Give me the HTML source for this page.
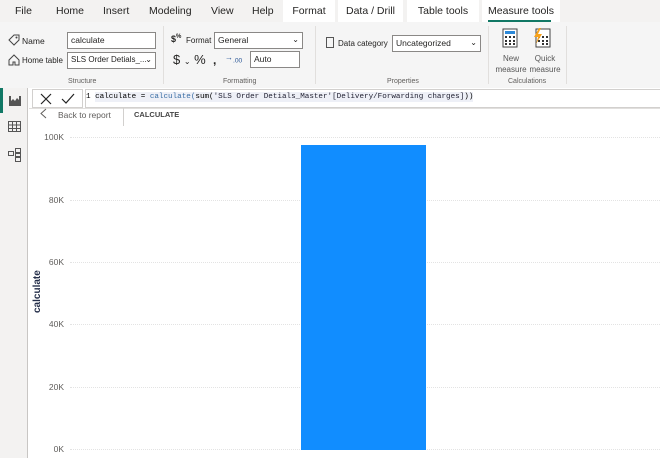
<!DOCTYPE html>
<html><head><style>
*{margin:0;padding:0;box-sizing:border-box}
body{width:660px;height:458px;overflow:hidden;background:#fff;font-family:"Liberation Sans",sans-serif;color:#252423;position:relative}
.a{position:absolute;white-space:nowrap}
.t{font-size:10.5px;top:5px}
.tab{position:absolute;top:0;height:22px;background:#fff;font-size:10.5px;text-align:center;padding-top:5px;white-space:nowrap}
.inp{position:absolute;border:1px solid #8a8886;background:#fff;font-size:8.5px;padding:2px 3px;height:17px;white-space:nowrap;overflow:hidden}
.s{font-size:8.5px}
.g{font-size:7px;color:#605e5c}
.lab{font-size:8.5px;color:#605e5c;right:596px;text-align:right}
.grid{position:absolute;left:70px;right:0;border-top:1px dotted #e3e3e3}
</style></head><body>
<div class="a" style="left:0;top:0;width:660px;height:88px;background:#f3f2f1"></div>
<div class="a t" style="left:15px">File</div>
<div class="a t" style="left:56px">Home</div>
<div class="a t" style="left:103px">Insert</div>
<div class="a t" style="left:149px">Modeling</div>
<div class="a t" style="left:211px">View</div>
<div class="a t" style="left:252px">Help</div>
<div class="tab" style="left:283px;width:52px">Format</div>
<div class="tab" style="left:338px;width:65px">Data / Drill</div>
<div class="tab" style="left:407px;width:72px">Table tools</div>
<div class="tab" style="left:482px;width:78px">Measure tools</div>
<div class="a" style="left:488px;top:20px;width:63px;height:2px;background:#117865"></div>
<div class="a" style="left:0;top:22px;width:660px;height:66px;background:#f5f5f5"></div>
<!-- Structure -->
<svg class="a" style="left:8px;top:34px" width="12" height="12" viewBox="0 0 12 12"><path d="M1 6 L6 1 H11 V6 L6 11 Z" fill="none" stroke="#444" stroke-width="1"/><circle cx="8.5" cy="3.5" r="1" fill="#444"/></svg>
<div class="a s" style="left:22px;top:36px">Name</div>
<div class="inp" style="left:67px;top:32px;width:89px">calculate</div>
<svg class="a" style="left:8px;top:54px" width="12" height="12" viewBox="0 0 12 12"><path d="M1 6 L6 1 L11 6 V11 H7 V8 H5 V11 H1 Z" fill="none" stroke="#444" stroke-width="1"/></svg>
<div class="a s" style="left:22px;top:56px;font-size:8px">Home table</div>
<div class="inp" style="left:67px;top:52px;width:89px;font-size:8px">SLS Order Detials_...<span style="position:absolute;right:3px">⌄</span></div>
<div class="a g" style="left:68px;top:78px">Structure</div>
<div class="a" style="left:163px;top:26px;width:1px;height:58px;background:#e1dfdd"></div>
<!-- Formatting -->
<div class="a" style="left:171px;top:34px;font-size:9px;font-weight:bold">$<sup style="font-size:6px">%</sup></div>
<div class="a s" style="left:186px;top:36px;font-size:8px">Format</div>
<div class="inp" style="left:214px;top:32px;width:89px">General<span style="position:absolute;right:3px;font-size:8px">⌄</span></div>
<div class="a" style="left:173px;top:52px;font-size:13px">$ <span style="font-size:8px">⌄</span> %&nbsp; <b style="font-size:12px">,</b></div>
<div class="a" style="left:225px;top:53px;font-size:8px;color:#2b5797">→<sub>.00</sub></div>
<div class="inp" style="left:250px;top:51px;width:50px">Auto</div>
<div class="a g" style="left:223px;top:78px">Formatting</div>
<div class="a" style="left:315px;top:26px;width:1px;height:58px;background:#e1dfdd"></div>
<!-- Properties -->
<div class="a" style="left:326px;top:37px;width:8px;height:11px;border:1px solid #555"></div>
<div class="a s" style="left:338px;top:39px;font-size:8px">Data category</div>
<div class="inp" style="left:392px;top:35px;width:89px">Uncategorized<span style="position:absolute;right:3px;font-size:8px">⌄</span></div>
<div class="a g" style="left:387px;top:78px">Properties</div>
<div class="a" style="left:488px;top:26px;width:1px;height:58px;background:#e1dfdd"></div>
<!-- Calculations -->
<svg class="a" style="left:502px;top:28px" width="16" height="20" viewBox="0 0 16 20"><rect x="1" y="1" width="14" height="18" fill="#fff" stroke="#444"/><rect x="3" y="3" width="10" height="3" fill="#2b88d8"/><g fill="#333"><rect x="3" y="8" width="2" height="2"/><rect x="7" y="8" width="2" height="2"/><rect x="11" y="8" width="2" height="2"/><rect x="3" y="12" width="2" height="2"/><rect x="7" y="12" width="2" height="2"/><rect x="11" y="12" width="2" height="2"/><rect x="3" y="15" width="2" height="2"/><rect x="7" y="15" width="2" height="2"/><rect x="11" y="15" width="2" height="2"/></g></svg>
<svg class="a" style="left:533px;top:28px" width="18" height="20" viewBox="0 0 18 20"><rect x="3" y="1" width="14" height="18" fill="#fff" stroke="#444"/><g fill="#333"><rect x="5" y="8" width="2" height="2"/><rect x="9" y="8" width="2" height="2"/><rect x="13" y="8" width="2" height="2"/><rect x="5" y="12" width="2" height="2"/><rect x="9" y="12" width="2" height="2"/><rect x="13" y="12" width="2" height="2"/><rect x="9" y="15" width="2" height="2"/><rect x="13" y="15" width="2" height="2"/></g><path d="M6 0 L1 9 H5 L3 16 L9 6 H5 L8 0Z" fill="#f7a21b"/></svg>
<div class="a" style="left:494px;top:53px;width:34px;text-align:center;line-height:11px;color:#555;font-size:8px">New<br>measure</div>
<div class="a" style="left:528px;top:53px;width:34px;text-align:center;line-height:11px;color:#555;font-size:8px">Quick<br>measure</div>
<div class="a g" style="left:508px;top:78px">Calculations</div>
<div class="a" style="left:566px;top:26px;width:1px;height:58px;background:#e1dfdd"></div>
<!-- left sidebar -->
<div class="a" style="left:0;top:88px;width:28px;height:370px;background:#f3f2f1;border-right:1px solid #c8c6c4"></div>
<div class="a" style="left:0;top:88px;width:3px;height:25px;background:#117865"></div>
<svg class="a" style="left:9px;top:95px" width="12" height="11" viewBox="0 0 12 11"><path d="M0 11 V1 H2 V6 L4 4 L6 6 L8 3 L10 5 V1 H12 V11Z" fill="#555"/></svg>
<svg class="a" style="left:8px;top:121px" width="13" height="11" viewBox="0 0 13 11"><rect x=".5" y=".5" width="12" height="10" fill="none" stroke="#555"/><path d="M.5 4H12.5M.5 7.5H12.5M4.5 .5V10.5M8.5 .5V10.5" stroke="#555"/></svg>
<svg class="a" style="left:8px;top:148px" width="13" height="14" viewBox="0 0 13 14"><rect x=".5" y="3.5" width="5" height="4" fill="none" stroke="#555"/><rect x="7.5" y=".5" width="5" height="4" fill="none" stroke="#555"/><rect x="7.5" y="5.5" width="5" height="3" fill="none" stroke="#555"/><rect x="7.5" y="9.5" width="5" height="4" fill="none" stroke="#555"/></svg>
<!-- formula bar -->
<div class="a" style="left:29px;top:88px;width:631px;height:21px;background:#fff;border-bottom:1px solid #e1dfdd"></div>
<div class="a" style="left:32px;top:89px;width:51px;height:19px;border:1px solid #d2d0ce"></div>
<svg class="a" style="left:40px;top:93px" width="12" height="12" viewBox="0 0 12 12"><path d="M1 1L11 11M11 1L1 11" stroke="#222" stroke-width="1.2"/></svg>
<svg class="a" style="left:61px;top:93px" width="14" height="11" viewBox="0 0 14 11"><path d="M1 6L5 10L13 1" fill="none" stroke="#222" stroke-width="1.2"/></svg>
<div class="a" style="left:85px;top:89px;width:575px;height:19px;border:1px solid #d2d0ce;border-right:none"></div>
<div class="a" style="left:86px;top:93px;font-family:'Liberation Mono',monospace;font-size:7.6px;color:#000">1 <span style="background:#eef0f7;padding:1px 0">calculate = <span style="color:#3a6ea5">calculate(</span>sum(<span style="color:#223">'SLS Order Detials_Master'[Delivery/Forwarding charges]</span>))</span></div>
<svg class="a" style="left:40px;top:108px" width="7" height="11" viewBox="0 0 7 11"><path d="M6 1L1 5.5L6 10" fill="none" stroke="#605e5c"/></svg>
<div class="a" style="left:58px;top:110px;font-size:8.5px;color:#605e5c">Back to report</div>
<div class="a" style="left:123px;top:108px;width:1px;height:18px;background:#d2d0ce"></div>
<div class="a" style="left:134px;top:110px;font-size:7.5px;font-weight:bold;color:#444">CALCULATE</div>
<!-- chart -->
<div class="grid" style="top:137px"></div>
<div class="grid" style="top:200px"></div>
<div class="grid" style="top:262px"></div>
<div class="grid" style="top:324px"></div>
<div class="grid" style="top:387px"></div>
<div class="grid" style="top:449px"></div>
<div class="a lab" style="top:132px">100K</div>
<div class="a lab" style="top:195px">80K</div>
<div class="a lab" style="top:257px">60K</div>
<div class="a lab" style="top:319px">40K</div>
<div class="a lab" style="top:382px">20K</div>
<div class="a lab" style="top:444px">0K</div>
<div class="a" style="left:32px;top:313px;transform:rotate(-90deg);transform-origin:0 0;font-size:10px;font-weight:bold;color:#252f4a">calculate</div>
<div class="a" style="left:301px;top:145px;width:125px;height:305px;background:#118dff"></div>
</body></html>
